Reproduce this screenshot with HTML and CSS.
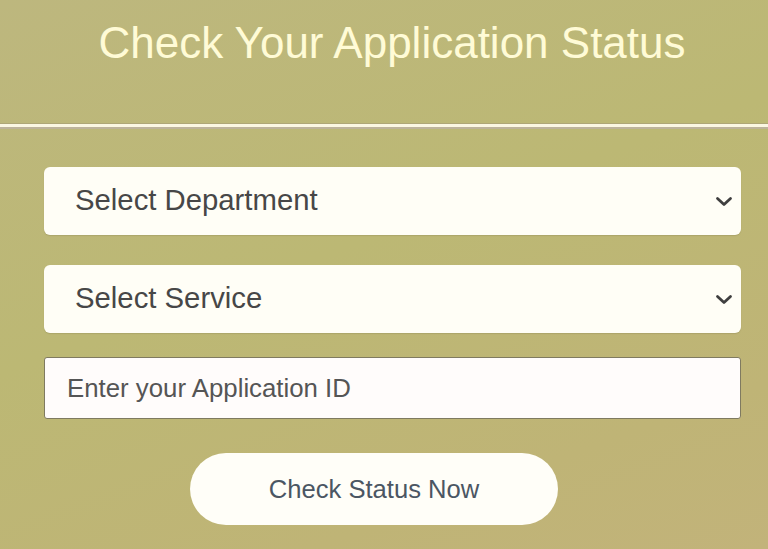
FILE: index.html
```html
<!DOCTYPE html>
<html lang="en">
<head>
<meta charset="utf-8">
<title>Check Your Application Status</title>
<link rel="stylesheet" href="styles.css">
</head>
<body>
<div class="page">
  <header class="header">
    <h1 class="title">Check Your Application Status</h1>
  </header>
  <div class="divider"></div>
  <form class="form">
    <div class="select">
      <span class="select-label">Select Department</span>
      <svg class="chevron" width="18" height="11" viewBox="0 0 18 11"><path d="M2.5 2.5 L9 8.5 L15.5 2.5" fill="none" stroke="#3f3f3f" stroke-width="2.8" stroke-linecap="round" stroke-linejoin="round"/></svg>
    </div>
    <div class="select">
      <span class="select-label">Select Service</span>
      <svg class="chevron" width="18" height="11" viewBox="0 0 18 11"><path d="M2.5 2.5 L9 8.5 L15.5 2.5" fill="none" stroke="#3f3f3f" stroke-width="2.8" stroke-linecap="round" stroke-linejoin="round"/></svg>
    </div>
    <div class="input">
      <span class="placeholder">Enter your Application ID</span>
    </div>
    <div class="button-row">
      <div class="button">Check Status Now</div>
    </div>
  </form>
</div>
</body>
</html>
```

FILE: styles.css
```css
html, body {
  margin: 0;
  padding: 0;
}
body {
  width: 768px;
  height: 549px;
  overflow: hidden;
  background: #bdb77b;
  font-family: "Liberation Sans", Arial, sans-serif;
}
.page {
  height: 549px;
  background: linear-gradient(160deg, #bdb77e 0%, #bcb874 45%, #bfb476 80%, #c2b37a 100%);
}
.header {
  height: 124px;
  padding-left: 16px;
  box-sizing: border-box;
  text-align: center;
}
.title {
  margin: 0;
  padding-top: 17px;
  font-size: 44px;
  line-height: 52px;
  font-weight: normal;
  color: #fffbd6;
}
.divider {
  height: 3px;
  background: #fbf7e2;
  box-shadow: 0 -1px 0 #aea677, 0 2px 0 #bdb39b;
}
.form {
  padding: 40px 27px 0 44px;
  display: flex;
  flex-direction: column;
}
.select {
  height: 68px;
  border-radius: 6px;
  background: #fffef6;
  display: flex;
  align-items: center;
  justify-content: space-between;
  padding: 0 8px 0 31px;
  margin-bottom: 30px;
  box-shadow: 0 1px 1px rgba(120, 110, 70, 0.25);
}
.select + .select {
  margin-bottom: 24px;
}
.select-label {
  font-size: 29.3px;
  color: #474747;
  padding-bottom: 2px;
}
.chevron {
  display: block;
}
.input {
  height: 62px;
  box-sizing: border-box;
  border: 1.5px solid #7f7a60;
  border-radius: 3px;
  background: #fffcfb;
  display: flex;
  align-items: center;
  padding-left: 22px;
}
.placeholder {
  font-size: 25.8px;
  color: #555555;
}
.button-row {
  padding-top: 34px;
  padding-left: 146px;
  display: flex;
}
.button {
  width: 368px;
  height: 72px;
  border-radius: 36px;
  background: #fffef8;
  display: flex;
  align-items: center;
  justify-content: center;
  font-size: 25.6px;
  color: #4b5663;
}
```
